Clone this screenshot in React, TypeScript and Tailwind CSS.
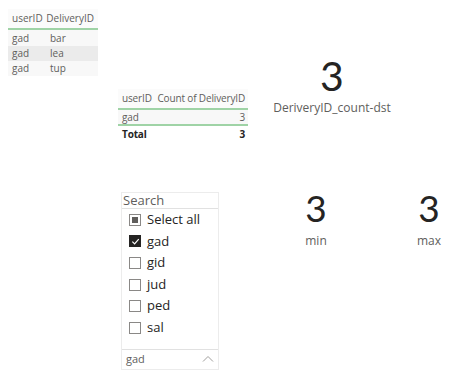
import React from "react";

const font = { fontFamily: '"Open Sans", "Noto Sans", sans-serif' };

const Check = ({ state }: { state: "off" | "on" | "partial" }) => {
    if (state === "on") {
        return (
            <span className="flex h-[12px] w-[12px] items-center justify-center bg-[#252423]">
                <svg width="9" height="9" viewBox="0 0 10 10" fill="none">
                    <path d="M1.5 5.2 L4 7.6 L8.6 2.4" stroke="white" strokeWidth="1.3" />
                </svg>
            </span>
        );
    }
    return (
        <span className="flex h-[12px] w-[12px] items-center justify-center border border-[#8a8886] bg-white">
            {state === "partial" && <span className="h-[6px] w-[6px] bg-[#605e5c]" />}
        </span>
    );
};

const App: React.FC = () => {
    const items: { label: string; state: "off" | "on" | "partial" }[] = [
        { label: "Select all", state: "partial" },
        { label: "gad", state: "on" },
        { label: "gid", state: "off" },
        { label: "jud", state: "off" },
        { label: "ped", state: "off" },
        { label: "sal", state: "off" },
    ];

    return (
        <div className="flex h-[382px] w-[474px] whitespace-nowrap bg-white" style={font}>
            {/* Column 1: delivery table */}
            <div className="w-[118px] pl-[8px] pt-[9px]">
                <div className="w-[90px] bg-[#f8f8f8] text-[10px] text-[#605e5c]">
                    <div className="flex h-[21px] items-center border-b-2 border-[#9fd3a6] bg-[#fbfbfb] px-[4px]">
                        <span className="w-[38px]">userID</span>
                        <span>DeliveryID</span>
                    </div>
                    <div className="flex h-[16px] items-center px-[4px]">
                        <span className="w-[38px]">gad</span>
                        <span>bar</span>
                    </div>
                    <div className="flex h-[15px] items-center bg-[#ebebeb] px-[4px]">
                        <span className="w-[38px]">gad</span>
                        <span>lea</span>
                    </div>
                    <div className="flex h-[15px] items-center px-[4px]">
                        <span className="w-[38px]">gad</span>
                        <span>tup</span>
                    </div>
                </div>
            </div>

            {/* Column 2: count table + slicer */}
            <div className="w-[152px] pt-[89px]">
                <div className="w-[130px] text-[10px] tracking-[-0.15px] text-[#605e5c]">
                    <div className="flex h-[21px] items-center justify-between border-b-2 border-[#9fd3a6] bg-[#fbfbfb] pl-[4px] pr-[3px]">
                        <span>userID</span>
                        <span>Count of DeliveryID</span>
                    </div>
                    <div className="flex h-[16px] items-center justify-between border-b-2 border-[#9fd3a6] bg-[#f8f8f8] pl-[4px] pr-[3px]">
                        <span>gad</span>
                        <span>3</span>
                    </div>
                    <div className="flex h-[16px] items-center justify-between pl-[4px] pr-[3px] font-bold text-[#252423]">
                        <span>Total</span>
                        <span>3</span>
                    </div>
                </div>

                <div className="ml-[3px] mt-[50px] w-[98px] border border-[#ececec]">
                    <div className="flex h-[16px] items-center border-b border-[#e1e1e1] pl-[1px] text-[13px] text-[#605e5c]">
                        Search
                    </div>
                    <div className="flex flex-col pb-[10px]">
                        {items.map((it) => (
                            <div key={it.label} className="flex h-[21.6px] items-center gap-[6px] pl-[7px] text-[13px] text-[#252423]">
                                <Check state={it.state} />
                                <span>{it.label}</span>
                            </div>
                        ))}
                    </div>
                    <div className="flex h-[20px] items-center justify-between border-t border-[#e1e1e1] px-[4px] text-[11px] text-[#605e5c]">
                        <span>gad</span>
                        <svg width="12" height="8" viewBox="0 0 12 8" fill="none">
                            <path d="M1 6.5 L6 1.5 L11 6.5" stroke="#a19f9d" strokeWidth="1" />
                        </svg>
                    </div>
                </div>
            </div>

            {/* Column 3: cards */}
            <div className="flex w-[124px] flex-col">
                <div className="flex h-[118px] flex-col items-center pt-[55px] text-center">
                    <span className="font-['Lato'] text-[41px] leading-none text-[#252423]">3</span>
                    <span className="mt-[4px] text-[12px] leading-[16px] text-[#605e5c]">DeriveryID_count-dst</span>
                </div>
                <div className="mr-[32px] flex flex-col items-center pt-[71px]">
                    <span className="font-['Lato'] text-[37px] leading-none text-[#252423]">3</span>
                    <span className="mt-[7px] text-[12px] leading-[16px] text-[#605e5c]">min</span>
                </div>
            </div>

            {/* Column 4: max card */}
            <div className="flex flex-1 flex-col items-center pr-[10px] pt-[189px]">
                <span className="font-['Lato'] text-[37px] leading-none text-[#252423]">3</span>
                <span className="mt-[7px] text-[12px] leading-[16px] text-[#605e5c]">max</span>
            </div>
        </div>
    );
};

export default App;
